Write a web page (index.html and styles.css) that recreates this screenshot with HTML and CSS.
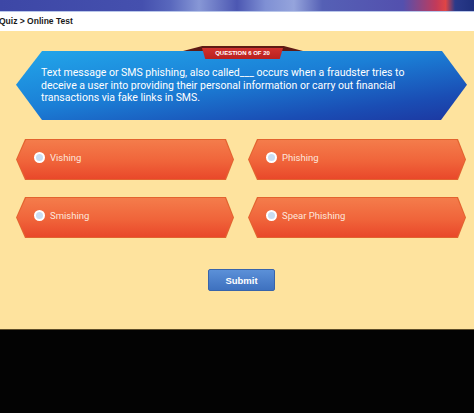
FILE: index.html
```html
<!DOCTYPE html>
<html lang="en">
<head>
    <meta charset="UTF-8">
    <meta name="viewport" content="width=device-width, initial-scale=1.0">
    <title>Online Test</title>
    <link rel="stylesheet" href="styles.css">
</head>
<body>
    <div class="banner"></div>
    <div class="crumb">Quiz &gt; Online Test</div>

    <div class="quiz">
        <!-- Question -->
        <div class="question">
            <div class="tab-wings"></div>
            <div class="tab">QUESTION 6 OF 20</div>
            <div class="question-box">
                Text message or SMS phishing, also called___ occurs when a fraudster tries to
                deceive a user into providing their personal information or carry out financial
                transactions via fake links in SMS.
            </div>
        </div>

        <!-- Options -->
        <div class="options">
            <label class="option"><span class="radio"></span>Vishing</label>
            <label class="option"><span class="radio"></span>Phishing</label>
            <label class="option"><span class="radio"></span>Smishing</label>
            <label class="option"><span class="radio"></span>Spear Phishing</label>
        </div>

        <div class="actions">
            <button class="submit">Submit</button>
        </div>
    </div>

    <div class="footer"></div>
</body>
</html>
```

FILE: styles.css
```css
body {
    margin: 0;
    background-color: #030303;
    font-family: Roboto, "Liberation Sans", sans-serif;
}
.banner {
    height: 12px;
    background: linear-gradient(to right, #3d47a6 0%, #4550ae 30%, #5968bd 36%, #8797d6 42%, #4c57b2 50%, #7f90d4 56%, #95a4dc 62%, #5560b5 68%, #5350ae 85%, #c23a5a 92%, #e04545 94%, #2a3a8a 96%, #1e2f7c 100%);
    border-bottom: 1px solid #b8c6ea;
    box-sizing: border-box;
}
.crumb {
    height: 19px;
    line-height: 19px;
    background-color: #fff;
    font-family: "Liberation Sans", Arial, sans-serif;
    font-weight: bold;
    font-size: 8.5px;
    color: #1a1a1a;
    margin-left: -1px;
}
.quiz {
    height: 298px;
    box-sizing: border-box;
    padding-top: 14px;
    background-color: #fee39e;
}
.question {
    position: relative;
    width: 451px;
    margin-left: 16px;
    padding-top: 6px;
}
.tab-wings {
    position: absolute;
    top: 1px;
    left: 167px;
    width: 120px;
    height: 5px;
    background-color: #5e1a14;
    clip-path: polygon(0 100%, 16% 0, 84% 0, 100% 100%);
}
.tab {
    position: absolute;
    top: 3px;
    left: 186px;
    width: 81px;
    height: 11px;
    line-height: 11px;
    background: linear-gradient(#d1312d, #b9201f);
    clip-path: polygon(0 0, 100% 0, 96% 100%, 4% 100%);
    color: #fff;
    font-family: "Liberation Sans", Arial, sans-serif;
    font-weight: bold;
    font-size: 6px;
    text-align: center;
    z-index: 1;
}
.question-box {
    height: 69px;
    box-sizing: border-box;
    padding: 16px 45px 0 25px;
    background: linear-gradient(172deg, #22a6ea 0%, #1b7fd6 45%, #1a4db4 80%, #1d37a0 100%);
    clip-path: polygon(26px 0, calc(100% - 25px) 0, 100% 49%, calc(100% - 26px) 100%, 26px 100%, 0 49%);
    color: #fff;
    font-size: 10.5px;
    line-height: 12.5px;
}
.options {
    display: grid;
    grid-template-columns: 218px 218px;
    column-gap: 14px;
    row-gap: 17px;
    margin-top: 19px;
    padding-left: 16px;
}
.option {
    position: relative;
    isolation: isolate;
    display: flex;
    align-items: center;
    gap: 5px;
    height: 41px;
    box-sizing: border-box;
    padding: 0 0 5px 18px;
    background-color: #e2632f;
    clip-path: polygon(9px 0, calc(100% - 8px) 0, 100% 50%, calc(100% - 8px) 100%, 9px 100%, 0 50%);
    color: #fde6dc;
    font-size: 9.5px;
    cursor: pointer;
}
.option::before {
    content: "";
    position: absolute;
    inset: 1px;
    z-index: -1;
    background: linear-gradient(#f47c4b, #f0643a 55%, #e9482a);
    clip-path: polygon(9px 0, calc(100% - 8px) 0, 100% 50%, calc(100% - 8px) 100%, 9px 100%, 0 50%);
}
.radio {
    width: 7px;
    height: 7px;
    border: 2px solid #fff;
    border-radius: 50%;
    background-color: #c9def3;
}
.actions {
    display: flex;
    justify-content: center;
    width: 451px;
    padding-left: 16px;
    margin-top: 31px;
}
.submit {
    width: 67px;
    height: 22px;
    background: linear-gradient(#5b90d8, #3e71bf);
    border: 1px solid #3864aa;
    border-radius: 2px;
    color: #fff;
    font-family: "Liberation Sans", Arial, sans-serif;
    font-weight: bold;
    font-size: 9.5px;
    cursor: pointer;
}
.footer {
    height: 1px;
    background-color: #5e4e2a;
}
```
